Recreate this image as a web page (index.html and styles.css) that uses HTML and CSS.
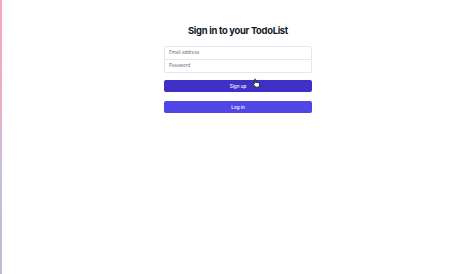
FILE: index.html
```html
<!DOCTYPE html>
<html lang="en">
<head>
<meta charset="utf-8">
<title>Sign in</title>
<link rel="stylesheet" href="styles.css">
</head>
<body>
<div class="page">
  <main class="auth">
    <h2 class="title">Sign in to your TodoList</h2>
    <form class="form">
      <div class="fields">
        <input class="field field-top" type="email" placeholder="Email address">
        <input class="field field-bottom" type="password" placeholder="Password">
      </div>
      <button type="button" class="btn btn-hover">Sign up</button>
      <button type="button" class="btn btn-login">Log in</button>
    </form>
  </main>
  <svg class="cursor" width="9" height="10" viewBox="0 0 16 18" aria-hidden="true">
    <path d="M5 1.5c.8 0 1.4.6 1.4 1.4v5l1-.2c.8 0 1.2.5 1.3 1 .3-.5.8-.7 1.3-.6.6.1 1 .6 1 1.1.3-.4.8-.6 1.3-.5.7.1 1.2.7 1.2 1.4v2.6c0 2-1.6 3.8-3.6 3.8H8.1c-1.2 0-2.3-.6-3-1.6L2 11.2c-.4-.6-.3-1.3.2-1.7.5-.4 1.3-.3 1.7.2l.7.9V2.9C4.6 2.1 4.2 1.5 5 1.5z" fill="#fff" stroke="#111" stroke-width="1.4"/>
  </svg>
</div>
</body>
</html>
```
FILE: styles.css
```css
html, body {
  margin: 0;
  height: 100%;
  background: #ffffff;
}

.page {
  position: relative;
  box-sizing: border-box;
  height: 100%;
  border-left: 2px solid;
  border-image: linear-gradient(#f7a6c6, #f2a9c8 30%, #cbbfd6 60%, #bdbccc) 1;
  font-family: Inter, "Liberation Sans", sans-serif;
}

.auth {
  width: 148px;
  margin: 0 auto;
  padding-top: 25px;
  display: flex;
  flex-direction: column;
  align-items: stretch;
}

.title {
  margin: 0 0 9px;
  font-size: 9.4px;
  line-height: 12px;
  font-weight: 700;
  letter-spacing: -0.3px;
  color: #111827;
  text-align: center;
}

.form {
  display: flex;
  flex-direction: column;
}

.fields {
  display: flex;
  flex-direction: column;
}

.field {
  box-sizing: border-box;
  height: 13.5px;
  margin: 0;
  padding: 0 4px;
  border: 1px solid #e6e7ec;
  font-family: inherit;
  font-size: 4.6px;
  color: #111827;
  background: #fff;
  outline: none;
}

.field::placeholder {
  color: #6b7280;
}

.field-top {
  border-radius: 2px 2px 0 0;
}

.field-bottom {
  border-top: none;
  border-radius: 0 0 2px 2px;
}

.btn {
  box-sizing: border-box;
  height: 12px;
  padding: 0;
  border: none;
  border-radius: 2px;
  font-family: inherit;
  font-size: 4.6px;
  font-weight: 500;
  color: #ffffff;
  cursor: pointer;
}

.btn-hover {
  margin-top: 7px;
  background: #3f2fc6;
}

.btn-login {
  margin-top: 9px;
  background: #4f46e5;
}

.cursor {
  position: absolute;
  left: 250px;
  top: 78px;
}
```
